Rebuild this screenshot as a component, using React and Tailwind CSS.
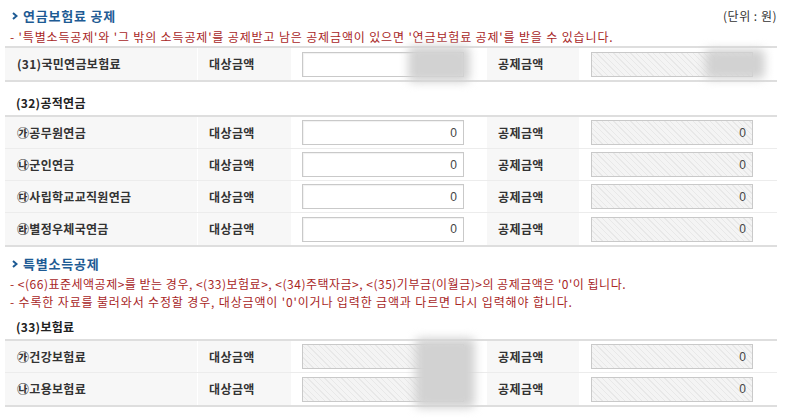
import React from "react";

const hatch =
  "bg-[repeating-linear-gradient(45deg,#f4f4f4_0px,#f4f4f4_3px,#e8e8e8_3px,#e8e8e8_4px)]";

const Chevron = () => (
  <svg width="6" height="8" viewBox="0 0 6 8" className="shrink-0">
    <path d="M1 1 L4.5 4 L1 7" fill="none" stroke="#1e5b94" strokeWidth="2" />
  </svg>
);

const Blur = ({ className }) => (
  <div className={"absolute pointer-events-none " + className}>
    <div className="w-full h-full bg-[#d2d2d2] blur-[5px] rounded-md" />
  </div>
);

const Field = ({ value, disabled, blurred }) => (
  <div
    className={
      "relative h-[25px] w-[162px] border border-[#c9c9c9] flex items-center justify-end pr-[6px] text-[12px] text-[#444] " +
      (disabled ? hatch : "bg-white shadow-[inset_1px_1px_1px_rgba(0,0,0,0.06)]")
    }
    style={{ fontFamily: '"Liberation Sans", Arial, sans-serif' }}
  >
    {value}
    {blurred}
  </div>
);

const Row = ({ label, left, right, last, leftBlur, rightBlur }) => (
  <div
    className={
      "grid grid-cols-[193px_94px_195px_93px_197px] h-[32px] " +
      (last ? "" : "border-b border-[#ececec]")
    }
  >
    <div className="bg-[#f7f7f7] border-r border-white flex items-center pl-[12px] font-bold text-[12px] text-[#333] tracking-[0.3px]">
      {label}
    </div>
    <div className="bg-[#f7f7f7] border-r border-white flex items-center pl-[11px] font-bold text-[12px] text-[#333] tracking-[0.4px]">
      대상금액
    </div>
    <div className="relative flex items-center pl-[10px]">
      {left}
      {leftBlur}
    </div>
    <div className="bg-[#f7f7f7] border-r border-white flex items-center pl-[11px] font-bold text-[12px] text-[#333] tracking-[0.4px]">
      공제금액
    </div>
    <div className="relative flex items-center pl-[11px]">
      {right}
      {rightBlur}
    </div>
  </div>
);

const Table = ({ children, className = "" }) => (
  <div className={"relative border-t-2 border-b-2 border-[#dedede] " + className}>
    {children}
  </div>
);

const Note = ({ children, className = "" }) => (
  <div className={"h-[18px] flex items-center pl-[5px] text-[12px] text-[#a8261f] whitespace-nowrap " + className}>
    {children}
  </div>
);

const Heading = ({ children, className = "" }) => (
  <div className={"h-[18px] flex items-center pl-[11px] font-bold text-[12px] text-[#222] tracking-[0.3px] " + className}>
    {children}
  </div>
);

const Title = ({ children }) => (
  <div className="flex items-center gap-[5px] pl-[7px] font-bold text-[13px] text-[#1e5b94] tracking-[0.8px]">
    <Chevron />
    <span>{children}</span>
  </div>
);

const pensions = ["㉮공무원연금", "㉯군인연금", "㉰사립학교교직원연금", "㉱별정우체국연금"];

export default function App() {
  return (
    <div
      className="w-[800px] h-[418px] bg-white overflow-hidden pt-[6px]"
      style={{ fontFamily: '"Noto Sans CJK KR", "Noto Sans", sans-serif' }}
    >
      <div className="ml-[5px] w-[772px]">
        <div className="h-[20px] flex items-center justify-between">
          <Title>연금보험료 공제</Title>
          <span className="text-[12px] text-[#333] tracking-[0.5px]">(단위 : 원)</span>
        </div>
        <Note className="mt-[2px] tracking-[0.85px]">
          - '특별소득공제'와 '그 밖의 소득공제'를 공제받고 남은 공제금액이 있으면 '연금보험료 공제'를 받을 수 있습니다.
        </Note>
        <Table>
          <Row
            label="(31)국민연금보험료"
            last
            left={<Field />}
            leftBlur={<Blur className="left-[116px] top-[-2px] w-[62px] h-[36px]" />}
            right={<Field disabled />}
            rightBlur={<Blur className="left-[125px] top-[1px] w-[60px] h-[30px]" />}
          />
        </Table>

        <Heading className="mt-[12px] mb-[3px]">(32)공적연금</Heading>
        <Table>
          {pensions.map((p, i) => (
            <Row
              key={p}
              label={p}
              last={i === pensions.length - 1}
              left={<Field value="0" />}
              right={<Field value="0" disabled />}
            />
          ))}
        </Table>

        <div className="mt-[8px] h-[18px] flex items-center">
          <Title>특별소득공제</Title>
        </div>
        <Note className="mt-[2px] tracking-[0.5px]">
          - &lt;(66)표준세액공제&gt;를 받는 경우, &lt;(33)보험료&gt;, &lt;(34)주택자금&gt;, &lt;(35)기부금(이월금)&gt;의 공제금액은 '0'이 됩니다.
        </Note>
        <Note className="tracking-[0.85px]">
          - 수록한 자료를 불러와서 수정할 경우, 대상금액이 '0'이거나 입력한 금액과 다르면 다시 입력해야 합니다.
        </Note>

        <Heading className="mt-[7px] mb-[3px]">(33)보험료</Heading>
        <Table>
          <Row label="㉮건강보험료" left={<Field disabled />} right={<Field value="0" disabled />} />
          <Row label="㉯고용보험료" last left={<Field disabled />} right={<Field value="0" disabled />} />
          <Blur className="left-[410px] top-[-3px] w-[60px] h-[70px]" />
        </Table>
      </div>
    </div>
  );
}
